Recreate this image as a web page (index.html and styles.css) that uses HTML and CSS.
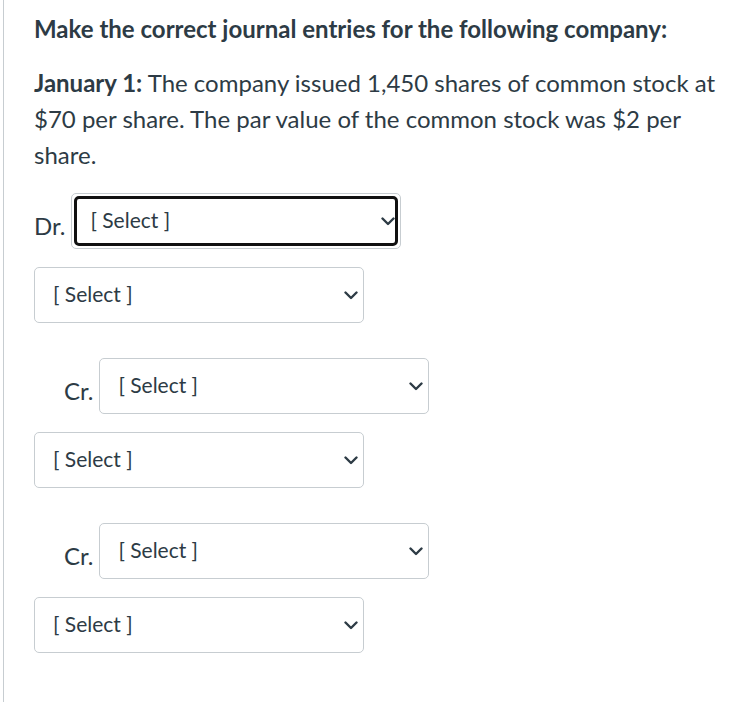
FILE: index.html
```html
<!DOCTYPE html>
<html lang="en">
<head>
    <meta charset="UTF-8">
    <meta name="viewport" content="width=device-width, initial-scale=1.0">
    <title>Journal Entries</title>
    <link rel="stylesheet" href="styles.css">
</head>
<body>
    <div class="question">
        <h2 class="question-title">Make the correct journal entries for the following company:</h2>
        <p class="question-text"><strong>January 1:</strong> The company issued 1,450 shares of common stock at $70 per share. The par value of the common stock was $2 per share.</p>

        <div class="entries">
            <!-- Debit -->
            <div class="entry">
                <div class="entry-row">
                    <span class="entry-label">Dr.</span>
                    <div class="select-wrap focused">
                        <select class="answer-select">
                            <option>[ Select ]</option>
                        </select>
                        <svg class="chevron" viewBox="0 0 14 9" width="14" height="9"><path d="M1.5 1.5 L7 7 L12.5 1.5" /></svg>
                    </div>
                </div>
                <div class="select-wrap">
                    <select class="answer-select">
                        <option>[ Select ]</option>
                    </select>
                    <svg class="chevron" viewBox="0 0 14 9" width="14" height="9"><path d="M1.5 1.5 L7 7 L12.5 1.5" /></svg>
                </div>
            </div>

            <!-- Credit 1 -->
            <div class="entry">
                <div class="entry-row credit">
                    <span class="entry-label">Cr.</span>
                    <div class="select-wrap">
                        <select class="answer-select">
                            <option>[ Select ]</option>
                        </select>
                        <svg class="chevron" viewBox="0 0 14 9" width="14" height="9"><path d="M1.5 1.5 L7 7 L12.5 1.5" /></svg>
                    </div>
                </div>
                <div class="select-wrap">
                    <select class="answer-select">
                        <option>[ Select ]</option>
                    </select>
                    <svg class="chevron" viewBox="0 0 14 9" width="14" height="9"><path d="M1.5 1.5 L7 7 L12.5 1.5" /></svg>
                </div>
            </div>

            <!-- Credit 2 -->
            <div class="entry">
                <div class="entry-row credit">
                    <span class="entry-label">Cr.</span>
                    <div class="select-wrap">
                        <select class="answer-select">
                            <option>[ Select ]</option>
                        </select>
                        <svg class="chevron" viewBox="0 0 14 9" width="14" height="9"><path d="M1.5 1.5 L7 7 L12.5 1.5" /></svg>
                    </div>
                </div>
                <div class="select-wrap">
                    <select class="answer-select">
                        <option>[ Select ]</option>
                    </select>
                    <svg class="chevron" viewBox="0 0 14 9" width="14" height="9"><path d="M1.5 1.5 L7 7 L12.5 1.5" /></svg>
                </div>
            </div>
        </div>
    </div>
</body>
</html>
```

FILE: styles.css
```css
/* General styling */
body {
    font-family: Lato, "Open Sans", Arial, sans-serif;
    margin: 0;
    padding: 0;
    background-color: #fff;
    color: #2d3b45;
}

.question {
    margin-left: 3px;
    border-left: 1px solid #c7cdd1;
    min-height: 702px;
    padding: 11px 20px 0 30px;
    box-sizing: border-box;
}

.question-title {
    font-size: 24px;
    line-height: 36px;
    font-weight: bold;
    margin: 0;
}

.question-text {
    font-size: 24px;
    line-height: 36px;
    margin: 18px 0 0 0;
}

/* Entries */
.entries {
    display: flex;
    flex-direction: column;
    gap: 35px;
    margin-top: 20px;
}

.entry {
    display: flex;
    flex-direction: column;
    align-items: flex-start;
    gap: 18px;
}

.entry-row {
    display: flex;
    align-items: flex-end;
    gap: 6px;
}

.entry-row.credit {
    padding-left: 30px;
}

.entry-label {
    font-size: 24px;
    line-height: 36px;
    padding-bottom: 5px;
}

/* Select boxes */
.select-wrap {
    position: relative;
}

.answer-select {
    appearance: none;
    -webkit-appearance: none;
    display: block;
    width: 330px;
    height: 56px;
    padding: 0 40px 3px 18px;
    font-family: Lato, "Open Sans", Arial, sans-serif;
    font-size: 21px;
    color: #2d3b45;
    background: #fff;
    border: 1px solid #c7cdd1;
    border-radius: 5px;
    outline: none;
}

/* focus ring drawn inside the border */
.select-wrap.focused::after {
    content: "";
    position: absolute;
    top: 3px;
    left: 3px;
    right: 3px;
    bottom: 3px;
    border: 3px solid #111;
    border-radius: 5px;
    pointer-events: none;
}

.chevron {
    position: absolute;
    right: 6px;
    top: 50%;
    margin-top: -4px;
    pointer-events: none;
}

.chevron path {
    fill: none;
    stroke: #2d3b45;
    stroke-width: 2.4;
    stroke-linecap: round;
    stroke-linejoin: round;
}
```
